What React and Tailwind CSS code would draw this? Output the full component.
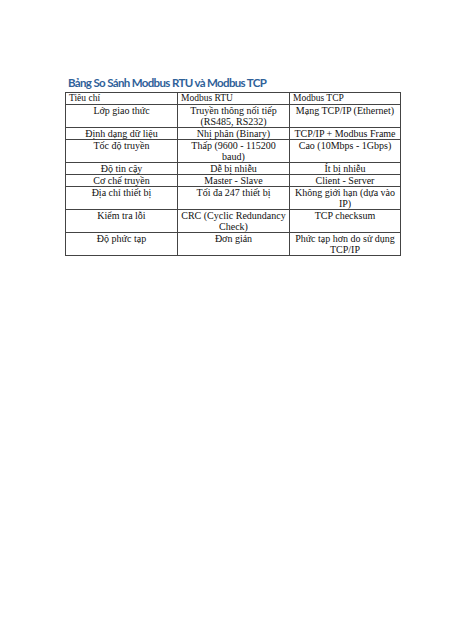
import React from "react";

const rows = [
  ["Lớp giao thức", "Truyền thông nối tiếp (RS485, RS232)", "Mạng TCP/IP (Ethernet)"],
  ["Định dạng dữ liệu", "Nhị phân (Binary)", "TCP/IP + Modbus Frame"],
  ["Tốc độ truyền", "Thấp (9600 - 115200 baud)", "Cao (10Mbps - 1Gbps)"],
  ["Độ tin cậy", "Dễ bị nhiễu", "Ít bị nhiễu"],
  ["Cơ chế truyền", "Master - Slave", "Client - Server"],
  ["Địa chỉ thiết bị", "Tối đa 247 thiết bị", "Không giới hạn (dựa vào IP)"],
  ["Kiểm tra lỗi", "CRC (Cyclic Redundancy Check)", "TCP checksum"],
  ["Độ phức tạp", "Đơn giản", "Phức tạp hơn do sử dụng TCP/IP"],
];

export default function App() {
  return (
    <div className="min-h-[632px] w-[474px] bg-white pl-[65px] pt-[75px]">
      <h1 className="mb-[2px] pl-[3px] font-['Lato','Open_Sans',sans-serif] text-[11.5px] font-bold leading-[15px] tracking-[-0.65px] text-[#2f6199]">
        Bảng So Sánh Modbus RTU và Modbus TCP
      </h1>
      <table className="w-[335px] table-fixed border-collapse font-['Liberation_Serif',serif] text-[10px] leading-[11px] text-[#111]">
        <colgroup>
          <col className="w-[112px]" />
          <col className="w-[112px]" />
          <col className="w-[111px]" />
        </colgroup>
        <thead>
          <tr>
            <th className="border border-[#444] px-[3px] text-left text-[9.5px] font-normal">Tiêu chí</th>
            <th className="border border-[#444] px-[3px] text-left text-[9.5px] font-normal">Modbus RTU</th>
            <th className="border border-[#444] px-[3px] text-left text-[9.5px] font-normal">Modbus TCP</th>
          </tr>
        </thead>
        <tbody>
          {rows.map((r) => (
            <tr key={r[0]}>
              {r.map((c, i) => (
                <td key={i} className="border border-[#444] px-[2px] text-center align-top">
                  {c}
                </td>
              ))}
            </tr>
          ))}
        </tbody>
      </table>
    </div>
  );
}
